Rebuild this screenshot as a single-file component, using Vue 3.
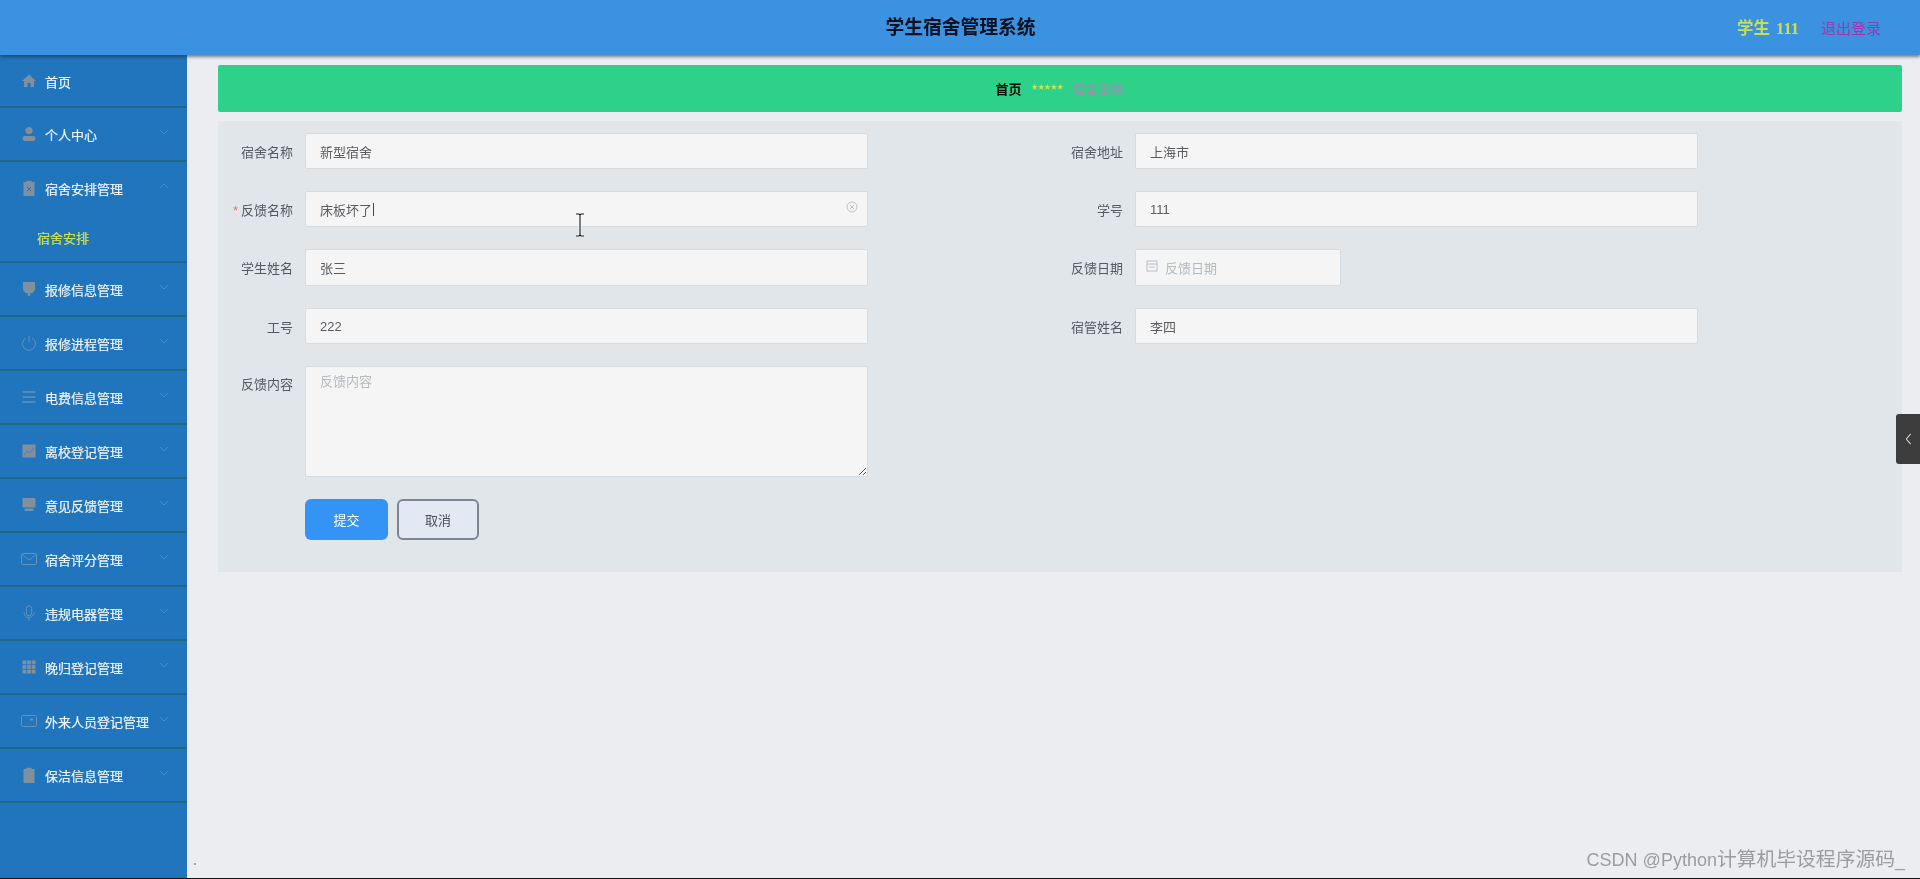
<script setup>
const F = '#80909f'
const S = '#6193bd'
const menu = [
  { name: '首页', icon: 'home', plain: true },
  { name: '个人中心', icon: 'user' },
  { name: '宿舍安排管理', icon: 'clip', open: true, sub: '宿舍安排' },
  { name: '报修信息管理', icon: 'plug' },
  { name: '报修进程管理', icon: 'power' },
  { name: '电费信息管理', icon: 'lines' },
  { name: '离校登记管理', icon: 'chart' },
  { name: '意见反馈管理', icon: 'screen' },
  { name: '宿舍评分管理', icon: 'mail' },
  { name: '违规电器管理', icon: 'mic' },
  { name: '晚归登记管理', icon: 'grid' },
  { name: '外来人员登记管理', icon: 'card' },
  { name: '保洁信息管理', icon: 'board' }
]
</script>

<template>
  <div class="page">
    <header class="topbar">
      <span></span>
      <h1 class="title">学生宿舍管理系统</h1>
      <div class="account">
        <span class="who">学生 111</span>
        <span class="logout">退出登录</span>
      </div>
    </header>

    <div class="body">
      <aside class="side">
        <div v-for="m in menu" :key="m.name" class="item" :class="{ first: m.plain, open: m.open }">
          <div class="head">
            <svg class="ico" viewBox="0 0 16 16" width="16" height="16">
              <path v-if="m.icon === 'home'" :fill="F" d="M8 1.5 15 8h-2v6H9.5v-4h-3v4H3V8H1z" />
              <g v-else-if="m.icon === 'user'" :fill="F">
                <circle cx="8" cy="4.5" r="3.6" />
                <rect x="1.6" y="10" width="12.8" height="5" rx="2.2" />
              </g>
              <g v-else-if="m.icon === 'clip'">
                <path :fill="F" d="M5.5 2V.8h5V2h3v14h-11V2z" />
                <path stroke="#2075bd" stroke-width="1" fill="none" d="M6 7l4 4M10 7l-4 4" />
              </g>
              <path v-else-if="m.icon === 'plug'" :fill="F" d="M2 1h12v8l-2.5 3H9.3v3H6.7v-3H4.5L2 9z" />
              <g v-else-if="m.icon === 'power'" fill="none" :stroke="S" stroke-width="1">
                <path d="M5 3a6.5 6.5 0 1 0 6 0" />
                <path d="M8 .8v6.5" />
              </g>
              <g v-else-if="m.icon === 'lines'" fill="none" :stroke="S" stroke-width="1.3">
                <path d="M1.5 3h13M1.5 8h13M1.5 13h13" />
              </g>
              <g v-else-if="m.icon === 'chart'">
                <rect x="1.5" y="1.5" width="13" height="13" :fill="F" />
                <path d="M3 12l3-4 2.5 2L13 5" fill="none" stroke="#4f7fa8" stroke-width="1" />
              </g>
              <g v-else-if="m.icon === 'screen'" :fill="F">
                <rect x="1.5" y="1" width="13" height="9.5" rx="1" />
                <rect x="3.5" y="11.5" width="9" height="2.5" rx=".8" />
              </g>
              <g v-else-if="m.icon === 'mail'" fill="none" :stroke="S" stroke-width="1">
                <rect x=".5" y="2.5" width="15" height="11" rx="1.2" />
                <path d="M1 3.5 8 9l7-5.5" />
              </g>
              <g v-else-if="m.icon === 'mic'" fill="none" :stroke="S" stroke-width="1">
                <rect x="5.3" y=".8" width="5.4" height="10" rx="2.7" />
                <path d="M3 7.5a5 5 0 0 0 10 0M8 12.5v3" />
              </g>
              <g v-else-if="m.icon === 'grid'" :fill="F">
                <rect x="1.5" y="1.5" width="3.8" height="3.8" /><rect x="6.1" y="1.5" width="3.8" height="3.8" /><rect x="10.7" y="1.5" width="3.8" height="3.8" />
                <rect x="1.5" y="6.1" width="3.8" height="3.8" /><rect x="6.1" y="6.1" width="3.8" height="3.8" /><rect x="10.7" y="6.1" width="3.8" height="3.8" />
                <rect x="1.5" y="10.7" width="3.8" height="3.8" /><rect x="6.1" y="10.7" width="3.8" height="3.8" /><rect x="10.7" y="10.7" width="3.8" height="3.8" />
              </g>
              <g v-else-if="m.icon === 'card'">
                <rect x=".5" y="2.5" width="15" height="11" rx="1.2" fill="none" :stroke="S" stroke-width="1" />
                <rect x="9" y="5.5" width="3" height="2" :fill="S" />
              </g>
              <g v-else :fill="F">
                <path d="M5.5 2V.8h5V2h3v14h-11V2z" />
              </g>
            </svg>
            <span class="label">{{ m.name }}</span>
            <svg v-if="!m.plain" class="chev" viewBox="0 0 10 6" width="10" height="6">
              <path :d="m.open ? 'M1 5.2 5 1l4 4.2' : 'M1 .8 5 5l4-4.2'" fill="none" stroke="#4b8fc6" stroke-width="1" />
            </svg>
          </div>
          <div v-if="m.sub" class="sub">{{ m.sub }}</div>
        </div>
        <i class="speck"></i>
      </aside>

      <main class="content">
        <div class="crumb">
          <b class="home">首页</b>
          <span class="stars">★★★★★</span>
          <span class="here">宿舍安排</span>
        </div>

        <form class="panel">
          <label class="lab">宿舍名称</label>
          <input class="field" value="新型宿舍" readonly />
          <i></i>
          <label class="lab">宿舍地址</label>
          <input class="field" value="上海市" readonly />

          <label class="lab"><em>*</em>反馈名称</label>
          <div class="wrap">
            <input class="field" value="床板坏了" readonly />
            <i class="caret"></i>
            <svg class="clear" viewBox="0 0 12 12" width="12" height="12">
              <circle cx="6" cy="6" r="5" fill="none" stroke="#b9bfc6" />
              <path d="M4 4l4 4M8 4l-4 4" stroke="#b9bfc6" />
            </svg>
          </div>
          <i></i>
          <label class="lab">学号</label>
          <input class="field" value="111" readonly />

          <label class="lab">学生姓名</label>
          <input class="field tall" value="张三" readonly />
          <i></i>
          <label class="lab">反馈日期</label>
          <div class="date">
            <svg viewBox="0 0 12 12" width="12" height="12">
              <rect x="1" y="1" width="10" height="10" fill="none" stroke="#b9bfc6" />
              <path d="M1 4h10M3 7h6" stroke="#b9bfc6" />
            </svg>
            <span>反馈日期</span>
          </div>

          <label class="lab">工号</label>
          <input class="field" value="222" readonly />
          <i></i>
          <label class="lab">宿管姓名</label>
          <input class="field" value="李四" readonly />

          <label class="lab top">反馈内容</label>
          <textarea class="area" placeholder="反馈内容" readonly></textarea>
          <i class="rest"></i>

          <span></span>
          <div class="actions">
            <button type="button" class="btn ok">提交</button>
            <button type="button" class="btn no">取消</button>
          </div>
        </form>

        <svg class="ibeam" viewBox="0 0 10 24" width="10" height="24">
          <path d="M1 1h3l1 1 1-1h3M5 2v20M1 23h3l1-1 1 1h3" fill="none" stroke="#fff" stroke-width="2.4" />
          <path d="M1 1h3l1 1 1-1h3M5 2v20M1 23h3l1-1 1 1h3" fill="none" stroke="#111" stroke-width="1.1" />
        </svg>
      </main>
    </div>

    <div class="pull">
      <svg viewBox="0 0 8 14" width="7" height="12"><path d="M6.5 1 1.5 7l5 6" fill="none" stroke="#d8d8d8" stroke-width="1.2" /></svg>
    </div>
    <div class="mark">CSDN @Python<span>计算机毕设程序源码</span>_</div>
  </div>
</template>

<style>
html, body { margin: 0; background: #ebedf1; overflow: hidden; }
</style>

<style scoped>
.page {
  position: relative;
  display: flex;
  flex-direction: column;
  height: 878px;
  border-bottom: 1px solid #111;
  overflow: hidden;
  background: #ebedf1;
  font-family: "Liberation Sans", "Noto Sans CJK SC", sans-serif;
  font-size: 13px;
  filter: blur(0.5px);
}
.topbar {
  position: relative;
  z-index: 2;
  flex: none;
  height: 55px;
  display: grid;
  grid-template-columns: 1fr auto 1fr;
  align-items: center;
  background: #3a92e0;
  box-shadow: 0 2px 3px rgba(30, 40, 50, .55);
}
.title {
  margin: 0;
  padding-left: 1px;
  font-size: 18.75px;
  line-height: 55px;
  font-weight: 700;
  color: #0b1020;
}
.account {
  justify-self: end;
  display: flex;
  align-items: center;
  gap: 22px;
  padding-right: 39px;
  margin-top: -1px;
}
.who {
  font-family: "Liberation Serif", "Noto Sans CJK SC", serif;
  font-size: 16.5px;
  font-weight: 700;
  word-spacing: 2px;
  color: #c9dd55;
}
.logout { font-size: 15px; color: #a334ae; }

.body { flex: 1; display: flex; min-height: 0; }
.side {
  position: relative;
  flex: none;
  width: 187px;
  background: #2075bd;
}
.item {
  height: 54px;
  box-sizing: border-box;
  border-bottom: 2px solid #1f6a82;
}
.item.first { height: 53px; }
.item.open { height: 101px; }
.head {
  display: flex;
  align-items: center;
  height: 52px;
  padding-left: 21px;
}
.ico { flex: none; width: 16px; height: 16px; }
.label { margin-left: 8px; color: #eef4fa; font-weight: 400; white-space: nowrap; -webkit-text-stroke: .2px #eef4fa; }
.chev { margin-left: auto; margin-right: 18px; margin-top: -4px; }
.sub {
  padding-left: 37px;
  margin-top: 4px;
  line-height: 42px;
  color: #cfe24a;
  -webkit-text-stroke: .2px #cfe24a;
}
.speck {
  position: absolute;
  left: 194px;
  bottom: 13px;
  width: 2px;
  height: 2px;
  background: #9aa0a6;
}

.content {
  position: relative;
  flex: 1;
  min-width: 0;
  padding: 10px 18px 0 31px;
}
.crumb {
  height: 47px;
  box-sizing: border-box;
  display: flex;
  align-items: center;
  justify-content: center;
  background: #2ed18a;
  border-radius: 2px;
}
.home { color: #0a0a0a; }
.stars { margin: -5px 9px 0 10px; font-size: 6.4px; letter-spacing: 0; color: #d8e24e; }
.here { color: #8a9ba8; font-weight: 700; }

.panel {
  margin-top: 9px;
  height: 451px;
  box-sizing: border-box;
  padding: 12px 0 0;
  background: #e1e6ea;
  display: grid;
  grid-template-columns: 87px 563px 179px 88px 563px;
  grid-auto-rows: min-content;
  row-gap: 22px;
}
.lab {
  align-self: center;
  padding-right: 12px;
  text-align: right;
  color: #55595f;
  white-space: nowrap;
}
.lab.top { align-self: start; padding-top: 8px; }
.lab em { margin-right: 3px; font-style: normal; color: #ef6b6b; }
.field {
  display: block;
  width: 100%;
  height: 36px;
  box-sizing: border-box;
  padding: 0 14px;
  border: 1px solid #d6dbe0;
  border-radius: 2px;
  outline: 0;
  background: #f5f5f5;
  color: #5a5c60;
  font: inherit;
}
.field.tall { height: 37px; }
.wrap { position: relative; }
.caret {
  position: absolute;
  left: 68px;
  top: 12px;
  width: 1px;
  height: 13px;
  background: #444;
}
.clear { position: absolute; right: 10px; top: 10px; }
.date {
  width: 206px;
  height: 37px;
  box-sizing: border-box;
  display: flex;
  align-items: center;
  gap: 7px;
  padding-left: 10px;
  border: 1px solid #d6dbe0;
  border-radius: 2px;
  background: #f5f5f5;
  color: #b5bac0;
}
.date svg { margin-top: -4px; }
.area {
  display: block;
  width: 100%;
  height: 111px;
  box-sizing: border-box;
  padding: 4px 14px;
  border: 1px solid #d6dbe0;
  border-radius: 2px;
  outline: 0;
  background: #f5f5f5;
  font: inherit;
}
.area::placeholder { color: #b5bac0; }
.rest { grid-column: span 3; }
.actions { display: flex; gap: 9px; }
.btn {
  height: 41px;
  box-sizing: border-box;
  border-radius: 6px;
  font: inherit;
  cursor: pointer;
}
.ok { width: 83px; border: 0; background: #3394f6; color: #fff; }
.no { width: 82px; border: 2px solid #7b8594; background: #e2e9f5; color: #4b4e55; }

.ibeam { position: absolute; left: 388px; top: 158px; }
.pull {
  position: absolute;
  right: 0;
  top: 414px;
  width: 24px;
  height: 50px;
  display: flex;
  align-items: center;
  justify-content: center;
  background: #3c3c3c;
  border-radius: 3px 0 0 3px;
}
.mark {
  position: absolute;
  right: 15px;
  bottom: 6px;
  font-size: 18px;
  line-height: 24px;
  color: #9a9c9f;
  white-space: nowrap;
}
.mark span { font-size: 19.8px; }
</style>
